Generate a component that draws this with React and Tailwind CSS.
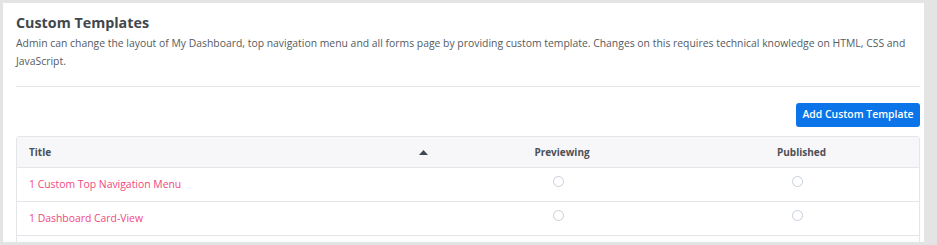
const rows = [
  { title: "1 Custom Top Navigation Menu" },
  { title: "1 Dashboard Card-View" },
];

function Radio() {
  return <span className="inline-block h-[11px] w-[11px] rounded-full border border-[#c5cfdb] bg-white" />;
}

export default function App() {
  return (
    <div
      className="h-[245px] w-[937px] overflow-hidden bg-[#e4e4e4] pl-[3px] pr-[13px] pt-[3px]"
      style={{ fontFamily: '"Open Sans", "Liberation Sans", sans-serif' }}
    >
      <div className="h-[239px] overflow-hidden bg-white pl-[13px] pr-[4px] pt-[9px]">
        <h1 className="text-[14.3px] font-bold leading-[22px] text-[#41474d]">Custom Templates</h1>
        <p className="text-[10.4px] leading-[18px] text-[#555b61]">
          Admin can change the layout of My Dashboard, top navigation menu and all forms page by providing custom
          template. Changes on this requires technical knowledge on HTML, CSS and JavaScript.
        </p>
        <div className="mt-[16px] border-t border-[#e6e6e6]" />
        <div className="flex justify-end pt-[16px]">
          <button className="h-[24px] w-[124px] rounded-[3px] bg-[#0a74e8] text-[10.4px] font-semibold text-white">
            Add Custom Template
          </button>
        </div>
        <div className="mt-[9px] rounded-t-[3px] border border-[#e3e5e8]">
          <div className="flex h-[31px] items-center border-b border-[#e3e5e8] bg-[#f7f7f9] text-[10px] font-bold text-[#4b5056]">
            <div className="flex w-[423px] items-center justify-between pl-[12px] pr-[12px]">
              <span>Title</span>
              <svg width="9" height="5" viewBox="0 0 9 5">
                <path d="M0 5 L4.5 0 L9 5 Z" fill="#3f4650" />
              </svg>
            </div>
            <div className="w-[244px] text-center">Previewing</div>
            <div className="flex-1 text-center">Published</div>
          </div>
          {rows.map((r) => (
            <div key={r.title} className="flex h-[34px] items-center border-b border-[#e3e5e8] text-[10.4px]">
              <div className="w-[423px] pl-[12px] text-[#f2477e]">{r.title}</div>
              <div className="flex w-[244px] justify-center pb-[6px] pr-[8px]">
                <Radio />
              </div>
              <div className="flex flex-1 justify-center pb-[6px] pr-[8px]">
                <Radio />
              </div>
            </div>
          ))}
          <div className="h-[20px]" />
        </div>
      </div>
    </div>
  );
}
